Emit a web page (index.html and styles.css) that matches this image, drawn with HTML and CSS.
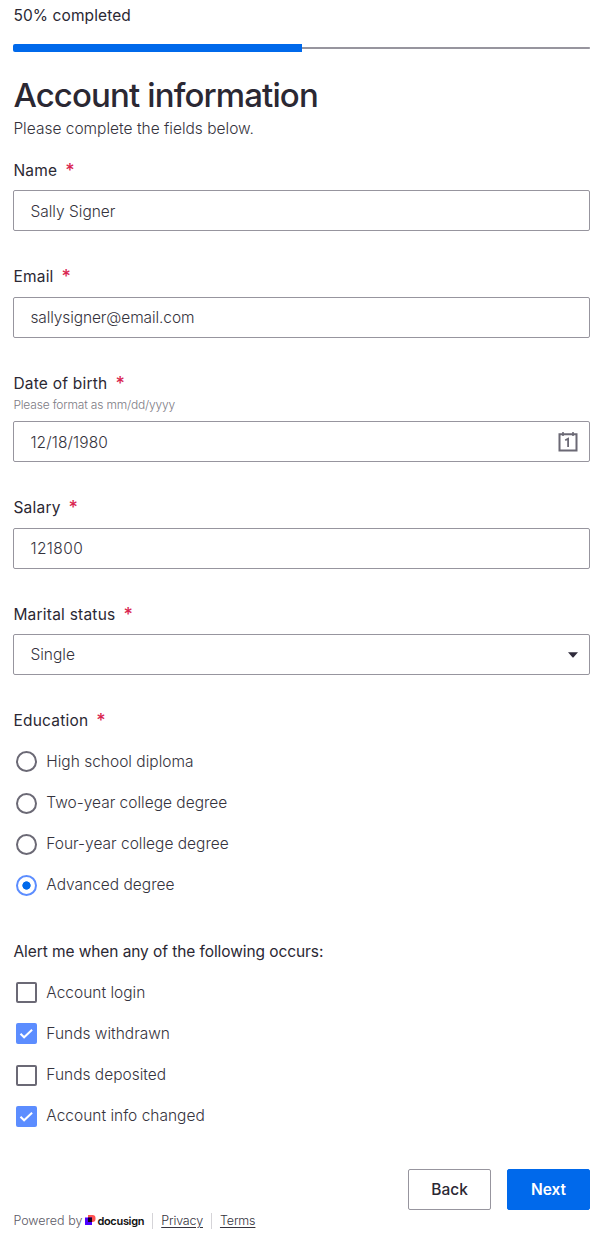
FILE: index.html
```html
<!DOCTYPE html>
<html lang="en">

<head>
    <meta charset="UTF-8">
    <title>Account information</title>
    <link rel="stylesheet" href="styles.css">
</head>

<body>
    <form class="page">
        <div class="progress-text">50% completed</div>
        <div class="progress">
            <div class="progress-bar"></div>
        </div>

        <h1>Account information</h1>
        <p class="intro">Please complete the fields below.</p>

        <div class="field">
            <label class="field-label" for="name">Name<span class="required">*</span></label>
            <input class="control" type="text" id="name" value="Sally Signer">
        </div>

        <div class="field">
            <label class="field-label" for="email">Email<span class="required">*</span></label>
            <input class="control control-email" type="text" id="email" value="sallysigner@email.com">
        </div>

        <div class="field">
            <label class="field-label" for="birth">Date of birth<span class="required">*</span></label>
            <div class="hint">Please format as mm/dd/yyyy</div>
            <div class="control-wrap">
                <input class="control control-date" type="text" id="birth" value="12/18/1980">
                <svg class="calendar" width="20" height="20" viewBox="0 0 20 20" fill="none" stroke="#6b6975">
                    <path d="M1.5 2.2h17v16.3h-17z" stroke-width="2" />
                    <path d="M5 0v4M15 0v4" stroke-width="1.6" />
                    <path d="M7.2 8.2l2.9-1.5v8.3" stroke-width="1.8" />
                </svg>
            </div>
        </div>

        <div class="field">
            <label class="field-label" for="salary">Salary<span class="required">*</span></label>
            <input class="control control-number" type="text" id="salary" value="121800">
        </div>

        <div class="field">
            <label class="field-label" for="status">Marital status<span class="required">*</span></label>
            <div class="control-wrap">
                <select class="control" id="status">
                    <option>Single</option>
                </select>
                <svg class="caret" width="10" height="6" viewBox="0 0 10 6">
                    <path d="M0 0.3h10L5.6 5.3q-.6.5-1.2 0z" fill="#2f2b3b" />
                </svg>
            </div>
        </div>

        <div class="group education">
            <div class="field-label">Education<span class="required">*</span></div>
            <label class="option"><input class="radio" type="radio" name="education">High school diploma</label>
            <label class="option"><input class="radio" type="radio" name="education">Two-year college degree</label>
            <label class="option"><input class="radio" type="radio" name="education">Four-year college degree</label>
            <label class="option"><input class="radio" type="radio" name="education" checked>Advanced degree</label>
        </div>

        <div class="group alerts">
            <div class="field-label">Alert me when any of the following occurs:</div>
            <label class="option"><span class="checkbox"></span>Account login</label>
            <label class="option">
                <span class="checkbox checked"><svg width="21" height="21" viewBox="0 0 21 21"><path d="M4.5 10.8l3.6 3.5 8-7.6" /></svg></span>
                Funds withdrawn
            </label>
            <label class="option"><span class="checkbox"></span>Funds deposited</label>
            <label class="option">
                <span class="checkbox checked"><svg width="21" height="21" viewBox="0 0 21 21"><path d="M4.5 10.8l3.6 3.5 8-7.6" /></svg></span>
                Account info changed
            </label>
        </div>

        <div class="actions">
            <button class="btn" type="button">Back</button>
            <button class="btn btn-primary" type="button">Next</button>
        </div>

        <div class="footer">
            <span>Powered by</span>
            <svg class="logo" width="11" height="10" viewBox="0 0 11 10">
                <path d="M3 0h4.5a3 3 0 0 1 3 3v1a3 3 0 0 1-3 3H3z" fill="#ff5252" />
                <path d="M0 2.5h7V10H.5Q0 10 0 9.5z" fill="#4c00ff" />
                <path d="M3 2.5h4V7H3z" fill="#160020" />
            </svg>
            <span class="brand">docusign</span>
            <span class="divider"></span>
            <a href="#">Privacy</a>
            <span class="divider"></span>
            <a href="#">Terms</a>
        </div>
    </form>
</body>

</html>
```
FILE: styles.css
```css
:root {
    --primary-color: #0069eb;
    --accent-color: #5c8dff;
    --text-color: #2b2833;
    --text-secondary: #35333d;
    --border-color: #97959e;
    --icon-color: #6b6975;
    --required-color: #d92550;
}

* {
    box-sizing: border-box;
    margin: 0;
    padding: 0;
}

body {
    background: #fff;
    color: var(--text-secondary);
    font-family: Inter, "Noto Sans", sans-serif;
    font-size: 15.5px;
    font-weight: 300;
    line-height: 24px;
}

.page {
    height: 1240px;
    padding: 4px 10px 0 13.4px;
    overflow: hidden;
    white-space: nowrap;
}

.progress-text {
    color: var(--text-color);
    font-weight: 400;
    letter-spacing: 0.1px;
}

.progress {
    display: flex;
    align-items: center;
    height: 10px;
    margin-top: 15px;
    background: linear-gradient(#97959e, #97959e) center / 100% 2px no-repeat;
}

.progress-bar {
    width: 50%;
    height: 8px;
    border-radius: 2px 0 0 2px;
    background: var(--primary-color);
}

h1 {
    margin-top: 22px;
    color: var(--text-color);
    font-size: 33px;
    font-weight: 500;
    letter-spacing: -0.88px;
    line-height: 40px;
}

.intro {
    margin-top: 2px;
}

.field {
    margin: 0 0 34px;
}

.intro + .field {
    margin-top: 18.1px;
}

.field-label {
    display: flex;
    align-items: center;
    height: 24px;
    color: var(--text-color);
    font-weight: 400;
    letter-spacing: 0.22px;
}

.required {
    margin-left: 8px;
    color: var(--required-color);
    font-size: 18px;
    font-weight: 500;
}

.control {
    display: block;
    width: 100%;
    height: 41px;
    margin-top: 7.3px;
    padding: 1px 16px 0;
    border: 1px solid var(--border-color);
    border-radius: 2px;
    background: #fff;
    color: var(--text-secondary);
    font: inherit;
    appearance: none;
}

.control-email {
    letter-spacing: -0.1px;
}

.control-date {
    letter-spacing: 0.12px;
}

.control-number {
    letter-spacing: 0.4px;
}

.control-wrap {
    position: relative;
}

.calendar {
    position: absolute;
    top: 10.5px;
    right: 12px;
}

.caret {
    position: absolute;
    top: 18px;
    right: 12px;
}

.hint {
    height: 18.4px;
    color: #7d7b84;
    font-size: 12px;
    letter-spacing: -0.18px;
    line-height: 18px;
}

.option {
    display: flex;
    align-items: center;
    gap: 9.5px;
    height: 41.1px;
    padding-left: 2.4px;
}

.group .field-label {
    margin-bottom: 8.4px;
}

.alerts {
    margin-top: 34.2px;
}

.alerts .field-label {
    letter-spacing: -0.08px;
}

.radio {
    width: 21px;
    height: 21px;
    border: 2px solid var(--icon-color);
    border-radius: 50%;
    appearance: none;
}

.radio:checked {
    border-color: var(--accent-color);
    background: radial-gradient(circle, var(--primary-color) 3.8px, #fff 4.5px);
}

.checkbox {
    width: 21px;
    height: 21px;
    border: 2px solid var(--icon-color);
    border-radius: 2px;
}

.checkbox.checked {
    border: none;
    background: var(--accent-color);
}

.checkbox svg {
    display: block;
    fill: none;
    stroke: #fff;
    stroke-width: 2;
}

.actions {
    display: flex;
    justify-content: flex-end;
    gap: 16px;
    margin-top: 32.4px;
}

.btn {
    width: 83px;
    height: 41px;
    border: 1px solid var(--border-color);
    border-radius: 2px;
    background: #fff;
    color: var(--text-color);
    font: inherit;
    font-weight: 450;
}

.btn-primary {
    border-color: var(--primary-color);
    background: var(--primary-color);
    color: #fff;
    font-weight: 600;
}

.footer {
    display: flex;
    align-items: center;
    height: 22px;
    color: #5b5965;
    font-size: 12.5px;
}

.logo {
    margin: -2px 1px 0 3px;
}

.brand {
    color: #111;
    font-size: 11px;
    font-weight: 600;
    letter-spacing: -0.3px;
}

.divider {
    width: 1px;
    height: 16px;
    margin: 0 8px;
    background: #d5d4d8;
}

.footer a {
    color: var(--text-secondary);
    letter-spacing: -0.15px;
    text-underline-offset: 2px;
}
```
